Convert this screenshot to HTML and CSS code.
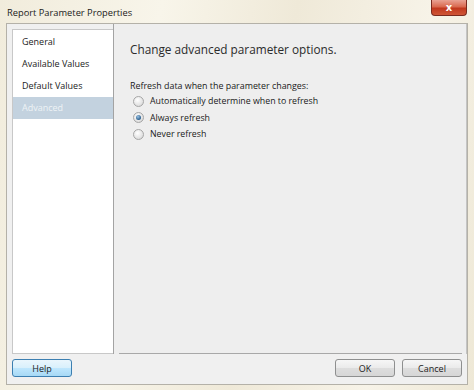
FILE: index.html
```html
<!DOCTYPE html>
<html>
<head>
  <meta charset="UTF-8">
  <link rel="stylesheet" href="styles.css">
  <title>Report Parameter Properties</title>
</head>
<body>
  <div class="window">
    <div class="titlebar">
      <span class="title">Report Parameter Properties</span>
      <button class="close">x</button>
    </div>

    <div class="client">
      <div class="main">
        <ul class="nav">
          <li>General</li>
          <li>Available Values</li>
          <li>Default Values</li>
          <li class="selected">Advanced</li>
        </ul>

        <div class="content">
          <div class="page">
            <h1>Change advanced parameter options.</h1>
            <p class="label">Refresh data when the parameter changes:</p>
            <label class="radio"><span class="dot"></span>Automatically determine when to refresh</label>
            <label class="radio checked"><span class="dot"></span>Always refresh</label>
            <label class="radio"><span class="dot"></span>Never refresh</label>
          </div>
          <div class="sep"></div>
        </div>
      </div>

      <div class="footer">
        <button class="btn help">Help</button>
        <div class="right">
          <button class="btn">OK</button>
          <button class="btn">Cancel</button>
        </div>
      </div>
    </div>
  </div>
</body>
</html>
```

FILE: styles.css
```css
  body {
    margin: 0;
    font-family: "Open Sans", "Noto Sans", sans-serif;
    background: #f3eee2;
  }

  .window {
    width: 474px;
    height: 390px;
    box-sizing: border-box;
    background: linear-gradient(100deg, #f1ecdc 0%, #f8f5ea 30%, #efe9d8 55%, #f7f3e8 80%, #eee8d6 100%);
    padding: 0 6px 5px 6px;
  }

  .titlebar {
    height: 23px;
    display: flex;
    justify-content: space-between;
    align-items: flex-start;
  }

  .title {
    font-size: 9.3px;
    color: #1a1a1a;
    margin-top: 6px;
    margin-left: 1px;
  }

  .close {
    width: 36px;
    height: 16px;
    margin-right: 1px;
    border: 1px solid #7a2a1e;
    border-top: none;
    border-radius: 0 0 4px 4px;
    background: linear-gradient(#e9a293 0%, #d9694f 45%, #c1381e 55%, #cf5637 100%);
    color: #fff;
    font-family: "DejaVu Sans", sans-serif;
    font-weight: bold;
    font-size: 10px;
    line-height: 12px;
    padding: 0;
  }

  .client {
    height: 362px;
    box-sizing: border-box;
    border: 1px solid #b4b1a8;
    background: #f0f0f0;
    display: flex;
    flex-direction: column;
  }

  .main {
    display: flex;
    height: 330px;
  }

  .nav {
    list-style: none;
    margin: 5px 0 0 5px;
    padding: 1px 0 0 0;
    width: 101px;
    height: 325px;
    box-sizing: border-box;
    background: #fff;
    border: 1px solid #c8c8c8;
    border-right: none;
  }

  .nav li {
    font-size: 9px;
    color: #222;
    height: 22px;
    line-height: 22px;
    padding-left: 9px;
  }

  .nav li.selected {
    background: #c3d2df;
    color: #eef2f6;
  }

  .content {
    flex: 1;
    display: flex;
    flex-direction: column;
    background: #eeeeee;
    border-left: 1px solid #a3a3a3;
    border-right: 1px solid #c4c4c4;
  }

  .page {
    flex: 1;
    padding-left: 16px;
  }

  .sep {
    height: 1px;
    margin: 0 4px 0 5px;
    background: #a8a8a8;
  }

  h1 {
    font-size: 11.8px;
    font-weight: normal;
    color: #2b2b2b;
    margin: 17px 0 0 0;
  }

  .label {
    font-size: 8.9px;
    color: #1a1a1a;
    margin: 22px 0 1px 0;
  }

  .radio {
    display: flex;
    align-items: center;
    font-size: 8.8px;
    color: #1a1a1a;
    height: 16.5px;
    padding-left: 3px;
  }

  .dot {
    width: 9px;
    height: 9px;
    border-radius: 50%;
    border: 1px solid #a6a6a6;
    background: radial-gradient(circle at 40% 35%, #fff 0%, #e4e4e4 60%, #cfcfcf 100%);
    margin-right: 6px;
    display: flex;
    align-items: center;
    justify-content: center;
  }

  .radio.checked .dot::after {
    content: "";
    width: 5px;
    height: 5px;
    border-radius: 50%;
    background: radial-gradient(circle at 40% 35%, #9cc3e4 0%, #2a5f8e 70%);
  }

  .footer {
    flex: 1;
    display: flex;
    justify-content: space-between;
    align-items: flex-start;
    padding: 5px 5px 0 5px;
  }

  .right {
    display: flex;
    gap: 7px;
  }

  .btn {
    width: 60px;
    height: 18px;
    font-family: "Open Sans", "Noto Sans", sans-serif;
    font-size: 9px;
    color: #222;
    padding: 0;
    border: 1px solid #8e8f8f;
    border-radius: 3px;
    background: linear-gradient(#f6f6f6 0%, #ebebeb 48%, #dddddd 52%, #d6d6d6 100%);
  }

  .btn.help {
    border-color: #3c7fb1;
    background: linear-gradient(#eaf6fd 0%, #d9f0fc 48%, #bee6fd 52%, #a7d9f5 100%);
  }
```
